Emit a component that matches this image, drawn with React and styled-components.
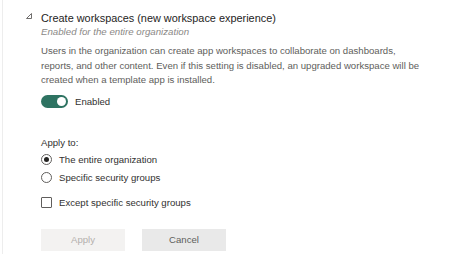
import styled, { createGlobalStyle } from "styled-components";

const GlobalStyle = createGlobalStyle`
  html, body {
    margin: 0;
    padding: 0;
    background: #ffffff;
  }
  body {
    font-family: "Liberation Sans", Arial, sans-serif;
    color: #323130;
  }
`;

const Page = styled.div`
  width: 472px;
  height: 254px;
  box-sizing: border-box;
  border-left: 1px solid #ededed;
  margin-left: 2px;
  overflow: hidden;
`;

const Setting = styled.div`
  display: flex;
  padding: 11px 0 0 23px;
  gap: 9px;
`;

const Caret = styled.div`
  width: 6px;
  padding-top: 2px;

  svg {
    display: block;
  }
`;

const Body = styled.div`
  display: flex;
  flex-direction: column;
`;

const Title = styled.div`
  font-size: 10.9px;
  line-height: 14px;
  color: #252423;
`;

const Subtitle = styled.div`
  font-size: 9.7px;
  line-height: 14px;
  font-style: italic;
  color: #8a8886;
`;

const Description = styled.p`
  margin: 5px 0 0;
  font-size: 9.6px;
  line-height: 14.5px;
  color: #605e5c;
  white-space: nowrap;
`;

const ToggleRow = styled.div`
  display: flex;
  align-items: center;
  gap: 7px;
  height: 14px;
  margin-top: 7px;
  font-size: 9.6px;
  color: #323130;
`;

const Toggle = styled.div`
  width: 27px;
  height: 13px;
  border-radius: 7px;
  background: ${(p) => (p.$on ? "#2e7362" : "#c8c6c4")};
  display: flex;
  align-items: center;
  justify-content: ${(p) => (p.$on ? "flex-end" : "flex-start")};
  padding: 0 2px;
  box-sizing: border-box;
`;

const Knob = styled.div`
  width: 9px;
  height: 9px;
  border-radius: 50%;
  background: #ffffff;
`;

const Label = styled.div`
  margin-top: 27px;
  font-size: 9.6px;
  line-height: 14px;
  color: #323130;
`;

const Options = styled.div`
  display: flex;
  flex-direction: column;
  gap: 4px;
  margin-top: 3px;
`;

const Option = styled.div`
  display: flex;
  align-items: center;
  gap: 7px;
  height: 14px;
  font-size: 9.6px;
  color: #323130;
  margin-top: ${(p) => p.$gap || 0}px;
`;

const Radio = styled.div`
  width: 11px;
  height: 11px;
  border-radius: 50%;
  border: 1px solid #605e5c;
  box-sizing: border-box;
  display: flex;
  align-items: center;
  justify-content: center;

  &::after {
    content: "";
    width: 5px;
    height: 5px;
    border-radius: 50%;
    background: ${(p) => (p.$checked ? "#252423" : "transparent")};
  }
`;

const Checkbox = styled.div`
  width: 11px;
  height: 11px;
  border: 1px solid #605e5c;
  border-radius: 1px;
  box-sizing: border-box;
`;

const Buttons = styled.div`
  display: flex;
  gap: 17px;
  margin-top: 19px;
`;

const Button = styled.button`
  width: 84px;
  height: 22px;
  border: none;
  padding: 0;
  font-family: inherit;
  font-size: 9.6px;
  background: ${(p) => (p.$disabled ? "#f3f2f1" : "#e9e9e9")};
  color: ${(p) => (p.$disabled ? "#b3b0ad" : "#605e5c")};
`;

const CaretIcon = () => (
  <svg width="6" height="6" viewBox="0 0 6 6">
    <path d="M5.5 0.5 L5.5 5.5 L0.5 5.5 Z" fill="none" stroke="#605e5c" strokeWidth="0.9" strokeLinejoin="round" />
  </svg>
);

export default function App() {
  return (
    <>
      <GlobalStyle />
      <Page>
        <Setting>
          <Caret>
            <CaretIcon />
          </Caret>
          <Body>
            <Title>Create workspaces (new workspace experience)</Title>
            <Subtitle>Enabled for the entire organization</Subtitle>
            <Description>
              Users in the organization can create app workspaces to collaborate on dashboards,
              <br />
              reports, and other content. Even if this setting is disabled, an upgraded workspace will be
              <br />
              created when a template app is installed.
            </Description>
            <ToggleRow>
              <Toggle $on>
                <Knob />
              </Toggle>
              Enabled
            </ToggleRow>
            <Label>Apply to:</Label>
            <Options>
              <Option>
                <Radio $checked />
                The entire organization
              </Option>
              <Option>
                <Radio />
                Specific security groups
              </Option>
              <Option $gap={7}>
                <Checkbox />
                Except specific security groups
              </Option>
            </Options>
            <Buttons>
              <Button $disabled>Apply</Button>
              <Button>Cancel</Button>
            </Buttons>
          </Body>
        </Setting>
      </Page>
    </>
  );
}
